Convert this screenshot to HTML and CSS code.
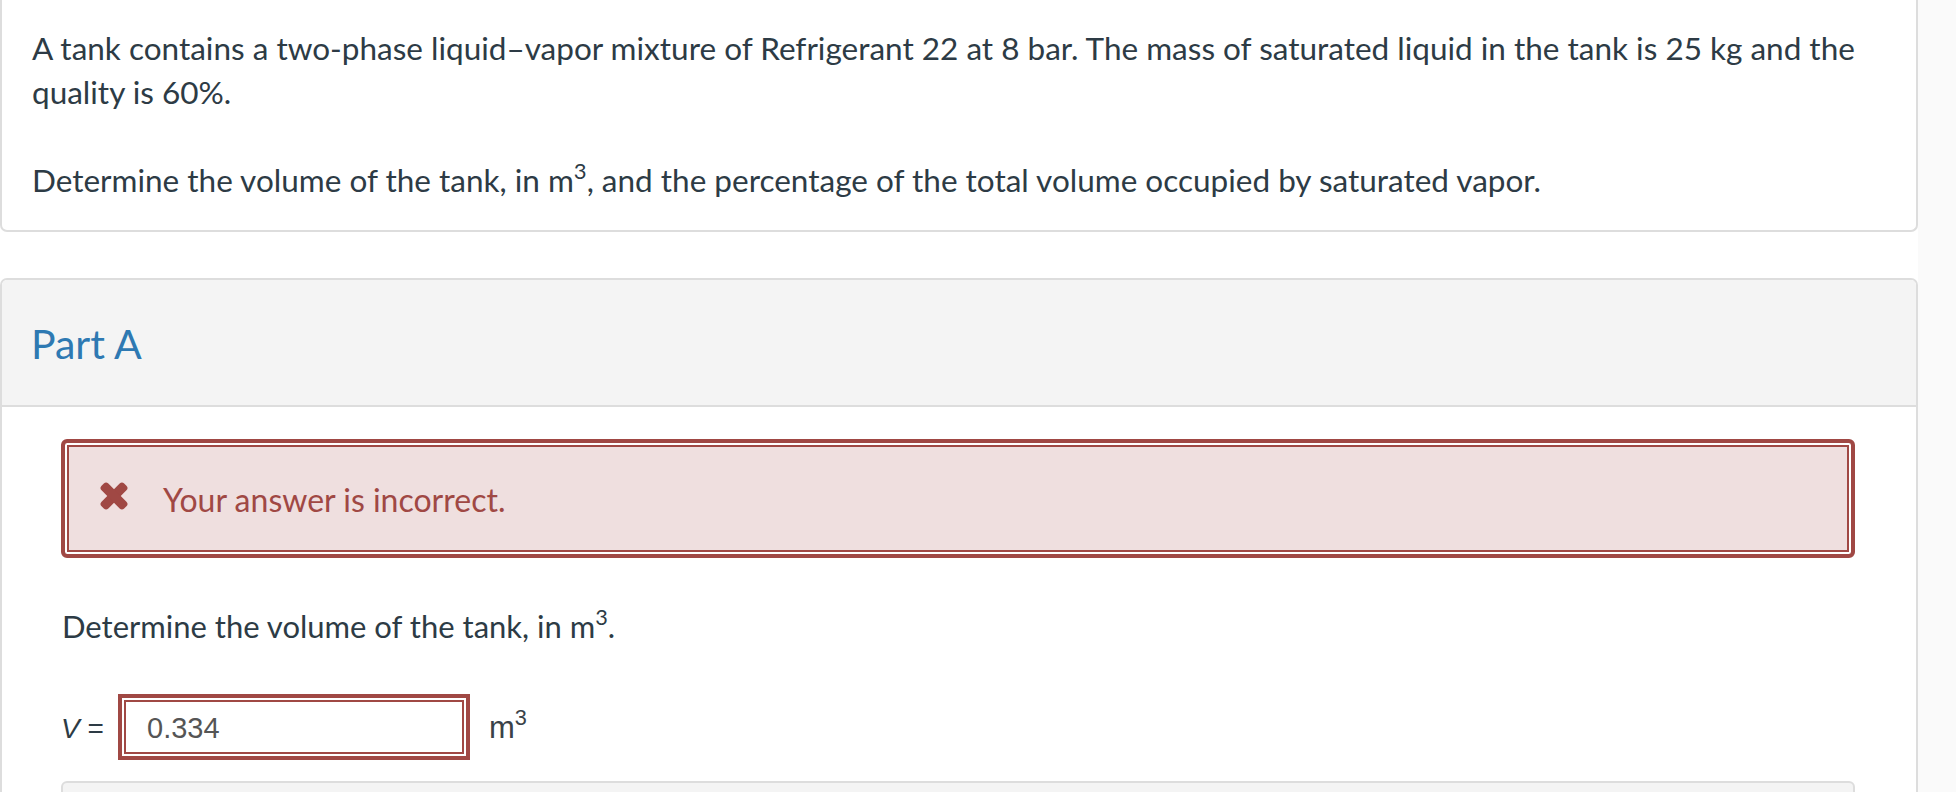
FILE: index.html
```html
<!DOCTYPE html>
<html lang="en">
<head>
<meta charset="utf-8">
<title>Part A</title>
<link rel="stylesheet" href="styles.css">
</head>
<body>
<main class="main">
  <section class="card intro">
    <p>A tank contains a two-phase liquid–vapor mixture of Refrigerant 22 at 8 bar. The mass of saturated liquid in the tank is 25 kg and the quality is 60%.</p>
    <p class="gap">Determine the volume of the tank, in m<sup>3</sup>, and the percentage of the total volume occupied by saturated vapor.</p>
  </section>

  <section class="card part">
    <header class="part-head"><h2 class="part-title">Part A</h2></header>
    <div class="part-body">
      <div class="feedback">
        <svg class="x-icon" viewBox="0 0 30 30" aria-hidden="true">
          <rect x="10.5" y="0" width="9" height="30" rx="3" transform="rotate(45 15 15)"/>
          <rect x="10.5" y="0" width="9" height="30" rx="3" transform="rotate(-45 15 15)"/>
        </svg>
        <span class="feedback-text">Your answer is incorrect.</span>
      </div>

      <p class="prompt">Determine the volume of the tank, in m<sup>3</sup>.</p>

      <div class="answer-row">
        <span class="var"><i>V</i> =</span>
        <div class="answer-input">0.334</div>
        <span class="unit">m<sup>3</sup></span>
      </div>

      <div class="next-box"></div>
    </div>
  </section>
</main>
</body>
</html>
```

FILE: styles.css
```css
html, body {
  margin: 0;
  padding: 0;
}

body {
  background: #fafafa;
  height: 792px;
  overflow: hidden;
  font-family: Lato, "Noto Sans", sans-serif;
  color: #2d3b45;
}

.main {
  width: 1918px;
  min-height: 792px;
  background: #ffffff;
  display: flex;
  flex-direction: column;
}

.card {
  box-sizing: border-box;
  border: 2px solid #dddddd;
}

.intro {
  border-top: 0;
  border-radius: 0 0 7px 7px;
  padding: 26px 30px 28px;
  font-size: 31.5px;
  line-height: 44px;
}

.intro p {
  margin: 0;
}

.intro .gap {
  margin-top: 44px;
}

sup {
  font-size: 0.7em;
  line-height: 0;
  vertical-align: 0.6em;
}

.part {
  margin-top: 46px;
  border-bottom: 0;
  border-radius: 7px 7px 0 0;
  flex: 1;
}

.part-head {
  height: 127px;
  background: #f4f4f4;
  border-bottom: 2px solid #dddddd;
  border-radius: 5px 5px 0 0;
  display: flex;
  align-items: center;
  padding: 2px 0 0 29px;
  box-sizing: border-box;
}

.part-title {
  margin: 0;
  font-weight: 400;
  font-size: 41px;
  color: #2e79b2;
}

.part-body {
  padding: 32px 61px 0 59px;
}

.feedback {
  box-sizing: border-box;
  height: 119px;
  border: 4px solid #a04844;
  border-radius: 6px;
  box-shadow: inset 0 0 0 2px #ffffff, inset 0 0 0 4px #a04844;
  background: #efdfdf;
  display: flex;
  align-items: center;
  padding: 2px 0 0 33px;
  gap: 33px;
}

.x-icon {
  width: 32px;
  height: 32px;
  fill: #a04844;
  flex: none;
  margin-top: -7px;
}

.feedback-text {
  font-size: 32px;
  line-height: 44px;
  color: #a04844;
}

.prompt {
  margin: 46px 0 0 1px;
  font-size: 31px;
  line-height: 44px;
}

.answer-row {
  margin: 46px 0 0 2px;
  display: flex;
  align-items: baseline;
}

.var {
  font-family: "Liberation Sans", Arial, sans-serif;
  font-size: 28px;
  color: #2d3b45;
  width: 57px;
  margin-left: -2px;
}

.answer-input {
  box-sizing: border-box;
  width: 352px;
  height: 66px;
  border: 4px solid #a04844;
  box-shadow: inset 0 0 0 2px #ffffff, inset 0 0 0 4px #a04844;
  padding: 2px 0 0 25px;
  line-height: 56px;
  font-family: "Liberation Sans", Arial, sans-serif;
  font-size: 29px;
  color: #555555;
}

.unit {
  margin-left: 19px;
  font-family: "Liberation Sans", Arial, sans-serif;
  font-size: 31px;
  color: #3a4248;
}

.next-box {
  margin-top: 21px;
  height: 60px;
  background: #f4f4f4;
  border: 2px solid #dddddd;
  border-radius: 6px;
}
```
